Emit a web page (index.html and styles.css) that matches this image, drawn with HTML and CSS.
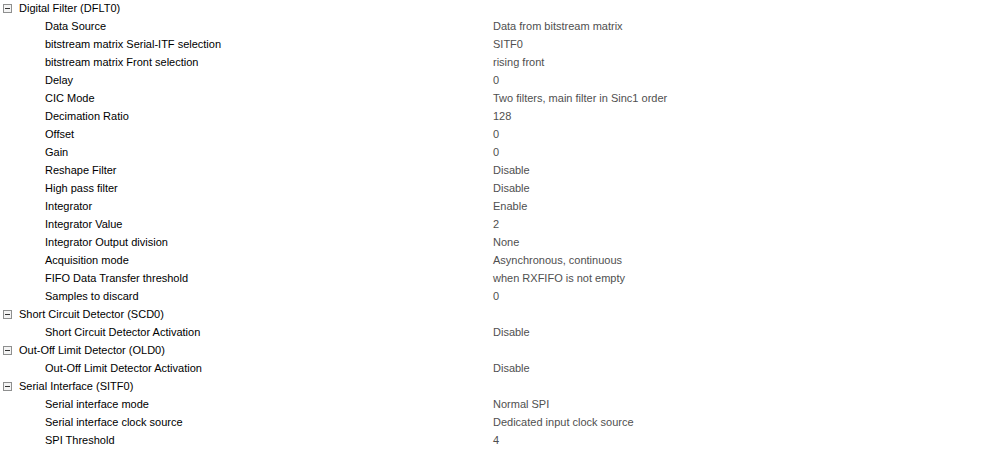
FILE: index.html
```html
<!DOCTYPE html>
<html lang="en">
<head>
    <meta charset="UTF-8">
    <title>DFSDM Parameters</title>
    <link rel="stylesheet" href="styles.css">
</head>
<body>
    <div class="tree">
        <div class="group">
            <div class="group-head"><span class="toggle"></span>Digital Filter (DFLT0)</div>
            <div class="row"><span class="name">Data Source</span><span class="value">Data from bitstream matrix</span></div>
            <div class="row"><span class="name">bitstream matrix Serial-ITF selection</span><span class="value">SITF0</span></div>
            <div class="row"><span class="name">bitstream matrix Front selection</span><span class="value">rising front</span></div>
            <div class="row"><span class="name">Delay</span><span class="value">0</span></div>
            <div class="row"><span class="name">CIC Mode</span><span class="value">Two filters, main filter in Sinc1 order</span></div>
            <div class="row"><span class="name">Decimation Ratio</span><span class="value">128</span></div>
            <div class="row"><span class="name">Offset</span><span class="value">0</span></div>
            <div class="row"><span class="name">Gain</span><span class="value">0</span></div>
            <div class="row"><span class="name">Reshape Filter</span><span class="value">Disable</span></div>
            <div class="row"><span class="name">High pass filter</span><span class="value">Disable</span></div>
            <div class="row"><span class="name">Integrator</span><span class="value">Enable</span></div>
            <div class="row"><span class="name">Integrator Value</span><span class="value">2</span></div>
            <div class="row"><span class="name">Integrator Output division</span><span class="value">None</span></div>
            <div class="row"><span class="name">Acquisition mode</span><span class="value">Asynchronous, continuous</span></div>
            <div class="row"><span class="name">FIFO Data Transfer threshold</span><span class="value">when RXFIFO is not empty</span></div>
            <div class="row"><span class="name">Samples to discard</span><span class="value">0</span></div>
        </div>
        <div class="group">
            <div class="group-head"><span class="toggle"></span>Short Circuit Detector (SCD0)</div>
            <div class="row"><span class="name">Short Circuit Detector Activation</span><span class="value">Disable</span></div>
        </div>
        <div class="group">
            <div class="group-head"><span class="toggle"></span>Out-Off Limit Detector (OLD0)</div>
            <div class="row"><span class="name">Out-Off Limit Detector Activation</span><span class="value">Disable</span></div>
        </div>
        <div class="group">
            <div class="group-head"><span class="toggle"></span>Serial Interface (SITF0)</div>
            <div class="row"><span class="name">Serial interface mode</span><span class="value">Normal SPI</span></div>
            <div class="row"><span class="name">Serial interface clock source</span><span class="value">Dedicated input clock source</span></div>
            <div class="row"><span class="name">SPI Threshold</span><span class="value">4</span></div>
        </div>
    </div>
</body>
</html>
```

FILE: styles.css
```css
body {
    margin: 0;
    background-color: #ffffff;
    font-family: "Liberation Sans", Tahoma, sans-serif;
    font-size: 11px;
    color: #000000;
}
.group-head {
    display: flex;
    align-items: center;
    height: 16px;
    line-height: 16px;
    padding-bottom: 2px;
}
.toggle {
    position: relative;
    width: 7px;
    height: 7px;
    margin: 0 7px 0 3px;
    border: 1px solid #8e8f8f;
    background-color: #f4f4f4;
}
.toggle::after {
    content: "";
    position: absolute;
    left: 1px;
    top: 3px;
    width: 5px;
    height: 1px;
    background-color: #333333;
}
.row {
    display: flex;
    height: 16px;
    line-height: 16px;
    padding-bottom: 2px;
}
.name {
    width: 448px;
    padding-left: 45px;
}
.value {
    color: #4f4f4f;
}
```
